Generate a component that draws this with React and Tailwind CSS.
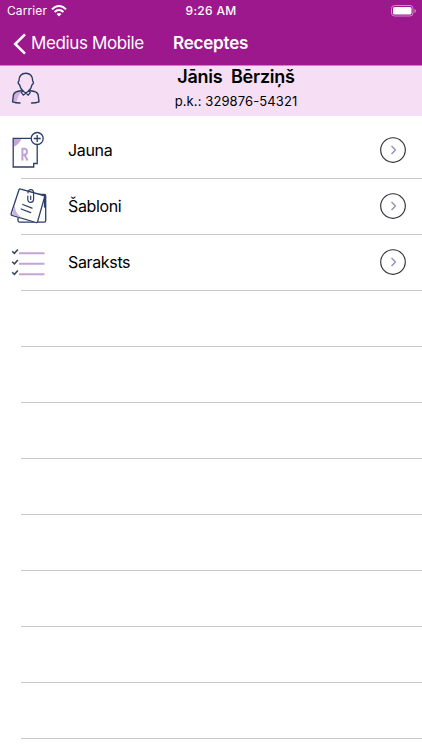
import React from 'react';

const PatientIcon = () => (
  <svg className="w-12 h-[50px] shrink-0" viewBox="0 0 48 50" fill="none" stroke="#263a61" strokeWidth="1.4" strokeLinejoin="round" strokeLinecap="round">
    <path d="M13.300 35.500c.2-5 .8-8.500 3-10l5 .5c-2.500 2.500-4 5-4.500 9.500z" fill="#cdb0dc" stroke="none" />
    <path d="M23.200 25.200c-1.800-1.500-3.100-3.700-3.700-6.500-1.500-1-1.800-2.700-.6-3.700-.2-4.800 2.800-7.800 6.900-7.800s7.100 3 6.900 7.800c1.200 1 .9 2.700-.6 3.700-.6 2.800-1.900 5-3.700 6.500" />
    <path d="M21.300 24.800c-5 .3-7.200 1.200-7.900 4.200l-.8 6.800c2.500.9 4.900 1.200 7.400 1.200M30.300 24.800c5 .3 7.200 1.200 7.900 4.200l.8 6.800c-2.500.9-4.900 1.200-7.400 1.200" />
    <path d="M22.800 24.500l-1.500 1.800 2 2.900 2.500-2.200 2.500 2.200 2-2.900-1.500-1.800M23.200 25.200l2.600 1.800 2.600-1.800" strokeWidth="1.200" />
  </svg>
);

const NewRecipeIcon = () => (
  <svg className="w-12 h-14 shrink-0" viewBox="0 .5 48 56" fill="none" stroke="#2b3f6b" strokeWidth="1.3">
    <path d="M14 17h7.500c-1.500 4-4 6.500-7.500 8z" fill="#c5a8d8" stroke="none" />
    <path d="M31.500 16.800H13.200v28.700h20.500v-3.500h3.500V23.500" />
    <circle cx="37.200" cy="17" r="6" fill="#fff" />
    <path d="M37.200 13.500v7M33.700 17h7" />
    <path d="M22.400 39V27.300h1.800c2 0 2.800 1 2.800 2.900s-.8 3-2.800 3h-1.800M24.500 33.200l3 5.800" stroke="#bfa3d3" strokeWidth="2" />
  </svg>
);

const TemplatesIcon = () => (
  <svg className="w-12 h-14 shrink-0" viewBox="0 .5 48 56" fill="none" stroke="#2b3f6b" strokeWidth="1.3" strokeLinejoin="round" strokeLinecap="round">
    <path d="M35 17h9.500q1.200 0 1.200 1.300v25q0 1.300-1.300 1.300H19.300q-1.300 0-1.300-1.500v-2.600M44.500 17.500v12" />
    <path d="M20.800 11.600l22.800 6.400q1.300.4.900 1.600l-6.900 24.500q-.4 1.300-1.600.9L12 37.900q-1.200-.4-.9-1.600L19 12.300q.5-1.200 1.800-.7z" fill="#fff" />
    <path d="M14.800 27.500c-.2 5.500 2.700 9.500 7 12.700L12 37.200z" fill="#ccb1dc" stroke="none" />
    <path d="M22.800 27l9.200 3.700M21.200 31.500l9.500 3.600" />
    <path d="M28 15.500c-.2-4.500 5.600-4.500 5.600 0v6.300c0 4-5.800 4-5.800.3V18.500M30.700 18.500v3.500" strokeWidth="1.200" />
  </svg>
);

const ListIcon = () => (
  <svg className="w-12 h-14 shrink-0" viewBox="0 .5 48 56" fill="none">
    <path d="M19 19.700h25.500M19 30.200h25.500M19 40.700h25.500" stroke="#c3a5d3" strokeWidth="1.900" />
    <path d="M12.200 17.700l2.200 2.100 3.500-3.900M12.200 28.200l2.200 2.100 3.500-3.900M12.200 38.700l2.200 2.100 3.500-3.900" stroke="#37425f" strokeWidth="1.500" />
  </svg>
);

const Disclosure = () => (
  <svg className="w-7 h-7" viewBox="0 0 28 28" fill="none">
    <circle cx="14" cy="14" r="12.300" stroke="#303038" strokeWidth="1.150" />
    <path d="M12.500 10l4 4-4 4" stroke="#8f88b5" strokeWidth="1.200" />
  </svg>
);

const items = [
  { label: 'Jauna', icon: NewRecipeIcon },
  { label: 'Šabloni', icon: TemplatesIcon },
  { label: 'Saraksts', icon: ListIcon },
];

const StatusBar = () => (
  <div className="grid grid-cols-3 items-center h-[22px] text-white">
    <div className="flex items-center pl-[7px] gap-[4px]">
      <span className="text-[12px] tracking-[0.1px]">Carrier</span>
      <svg className="w-4 h-3" viewBox="0 0 16 12" fill="none" stroke="white" strokeWidth="2">
        <path d="M1 4.300C5-.2 11-.2 15 4.300M3.600 7c2.500-2.600 6.300-2.600 8.800 0" />
        <path d="M5.600 8.900L8 11.500l2.400-2.600c-1.400-1.200-3.400-1.200-4.800 0z" fill="white" stroke="none" />
      </svg>
    </div>
    <span className="text-center text-[12px] font-medium tracking-[0.3px]">9:26 AM</span>
    <svg className="w-[26px] h-3 justify-self-end mr-[5px]" viewBox="0 0 26 12">
      <rect x=".5" y=".5" width="21.500" height="10.500" rx="3" fill="none" stroke="#d08bca" />
      <rect x="2" y="2" width="18.500" height="7.500" rx="1.500" fill="white" />
      <path d="M23.500 4v4q1.500-.7 1.500-2t-1.500-2z" fill="#d08bca" />
    </svg>
  </div>
);

const NavBar = () => (
  <div className="flex items-center h-[43px] pl-[13px] text-white text-[17px]">
    <svg className="w-3.5 h-[22px]" viewBox="0 0 14 22" fill="none" stroke="white" strokeWidth="2.600">
      <path d="M12 1.300L2.200 11 12 20.700" />
    </svg>
    <span className="ml-1 w-[142px] whitespace-nowrap tracking-[-0.37px]">Medius Mobile</span>
    <h1 className="font-semibold tracking-[-0.2px]">Receptes</h1>
  </div>
);

const App = () => {
  return (
    <div className="w-full h-[750px] overflow-hidden bg-white font-['Inter','Liberation_Sans',sans-serif] text-black">
      <header className="bg-[#9d188c]">
        <StatusBar />
        <NavBar />
      </header>
      <section className="flex h-[51px] bg-[#f6dff5] border-t border-[#d17dca]">
        <PatientIcon />
        <div className="flex-1 pl-[2px] text-center">
          <div className="text-[18px] leading-[22px] font-semibold tracking-[-0.25px] whitespace-pre">Jānis  Bērziņš</div>
          <div className="mt-[3px] text-[13px] leading-5 tracking-[0.1px]">p.k.: 329876-54321</div>
        </div>
      </section>
      <ul className="pt-[7px]">
        {items.map(({ label, icon: Icon }) => (
          <li key={label}>
            <div className="flex items-center h-[55px] pb-[2px]">
              <Icon />
              <span className="ml-5 flex-1 text-[16px] tracking-[-0.35px]">{label}</span>
              <div className="mr-[15px]">
                <Disclosure />
              </div>
            </div>
            <div className="ml-[21px] h-px bg-[#c8c8ca]" />
          </li>
        ))}
        {Array.from({ length: 8 }).map((_, i) => (
          <li key={i} className="ml-[21px] h-14 border-b border-[#c8c8ca]" />
        ))}
      </ul>
    </div>
  );
};

export default App;
